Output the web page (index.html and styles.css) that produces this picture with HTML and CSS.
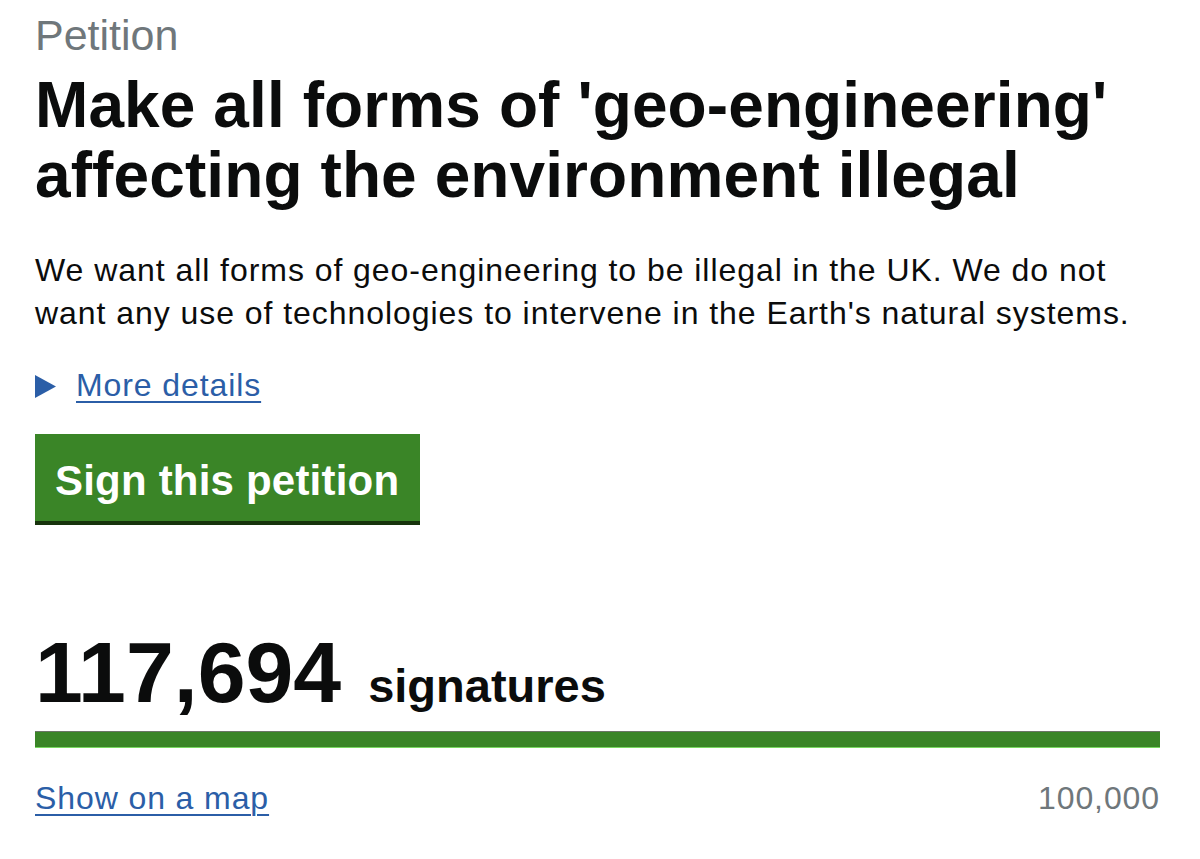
FILE: index.html
```html
<!DOCTYPE html>
<html lang="en">
<head>
<meta charset="utf-8">
<title>Petition</title>
<link rel="stylesheet" href="styles.css">
</head>
<body>
<main class="page">
  <span class="caption">Petition</span>
  <h1 class="title">Make all forms of 'geo-engineering' affecting the environment illegal</h1>
  <p class="summary">We want all forms of geo-engineering to be illegal in the UK. We do not want any use of technologies to intervene in the Earth's natural systems.</p>
  <div class="details">
    <svg class="arrow" width="21" height="23" viewBox="0 0 21 23" aria-hidden="true"><polygon points="0,0 21,11.5 0,23" fill="#2b5ea7"/></svg>
    <a class="link" href="#">More details</a>
  </div>
  <div class="actions">
    <a class="button" href="#">Sign this petition</a>
  </div>
  <div class="count">
    <span class="count-number">117,694</span>
    <span class="count-label">signatures</span>
  </div>
  <div class="progress"><div class="progress-fill" style="width:100%"></div></div>
  <div class="footer-row">
    <a class="link" href="#">Show on a map</a>
    <span class="target">100,000</span>
  </div>
</main>
</body>
</html>
```
FILE: styles.css
```css
html, body {
  margin: 0;
  padding: 0;
  background: #ffffff;
}
body {
  font-family: "Liberation Sans", Arial, Helvetica, sans-serif;
  color: #0b0c0c;
}
.page {
  width: 1125px;
  margin-left: 35px;
  padding-top: 10px;
  display: flex;
  flex-direction: column;
}
.caption {
  display: block;
  font-size: 43px;
  line-height: 50px;
  color: #6f777b;
}
.title {
  margin: 10px 0 0;
  font-size: 64px;
  line-height: 70px;
  font-weight: 700;
  letter-spacing: 0.1px;
}
.summary {
  margin: 39px 0 0;
  font-size: 32px;
  line-height: 43px;
  letter-spacing: 0.95px;
}
.details {
  margin-top: 29px;
  display: flex;
  align-items: center;
  gap: 20px;
  height: 43px;
}
.arrow {
  display: block;
  margin-top: 2px;
}
.link {
  font-size: 32px;
  line-height: 43px;
  letter-spacing: 0.9px;
  color: #2b5ea7;
  text-decoration: underline;
  text-decoration-thickness: 2px;
  text-underline-offset: 5px;
}
.actions {
  margin-top: 27px;
  display: flex;
}
.button {
  display: block;
  background: #3a8527;
  color: #ffffff;
  font-size: 42px;
  line-height: 50px;
  font-weight: 700;
  letter-spacing: 0.2px;
  text-decoration: none;
  padding: 22px 21px 15px 20px;
  box-shadow: 0 4px 0 #17330c;
}
.count {
  margin-top: 106px;
  display: flex;
  align-items: baseline;
  gap: 27px;
}
.count-number {
  font-size: 86px;
  line-height: 90px;
  font-weight: 700;
}
.count-label {
  font-size: 47px;
  font-weight: 700;
}
.progress {
  margin-top: 14px;
  height: 17px;
  background: #dee0e2;
  box-sizing: border-box;
}
.progress-fill {
  height: 100%;
  background: #3a8527;
  border-top: 1px solid #6b7566;
  border-bottom: 1px solid #78d860;
  box-sizing: border-box;
}
.footer-row {
  margin-top: 29px;
  display: flex;
  justify-content: space-between;
  align-items: baseline;
}
.target {
  font-size: 32px;
  line-height: 43px;
  letter-spacing: 0.9px;
  color: #6f777b;
}
```
